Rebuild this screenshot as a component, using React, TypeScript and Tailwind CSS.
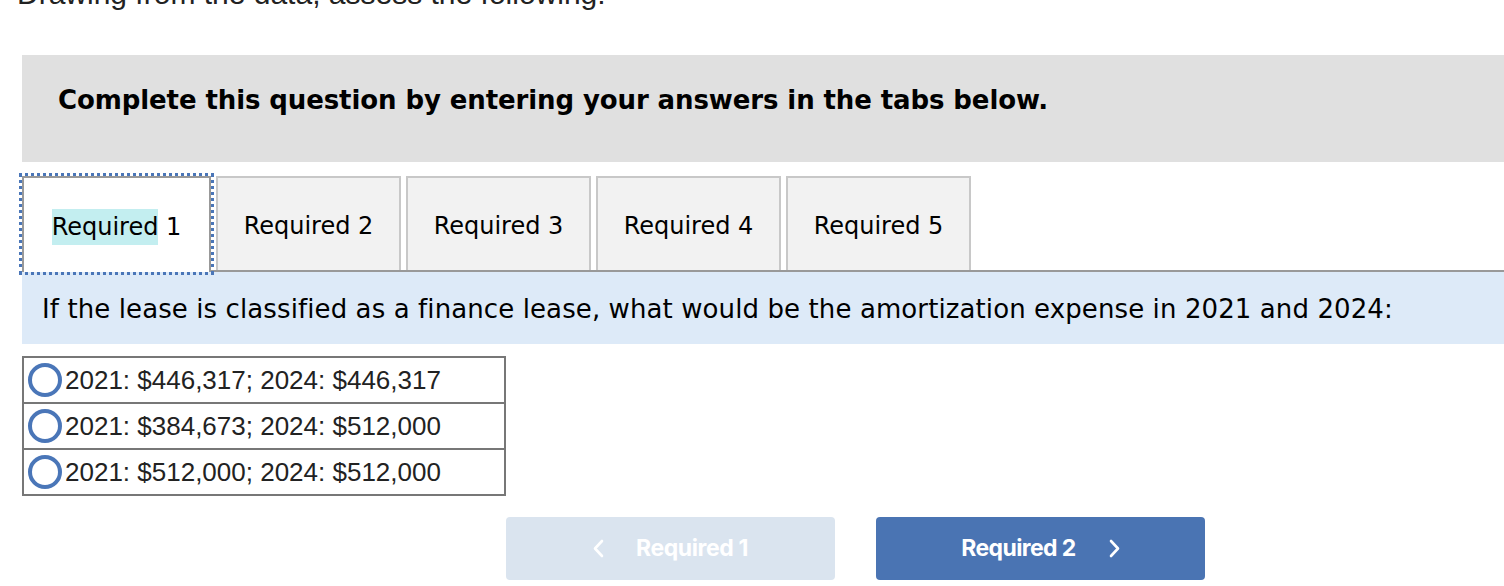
import React from 'react';

const tabs = ['Required 1', 'Required 2', 'Required 3', 'Required 4', 'Required 5'];

const options = [
  '2021: $446,317; 2024: $446,317',
  '2021: $384,673; 2024: $512,000',
  '2021: $512,000; 2024: $512,000',
];

const Chevron: React.FC<{ dir: 'left' | 'right' }> = ({ dir }) => (
  <svg width="11" height="19" viewBox="0 0 11 19" fill="none">
    <polyline
      points={dir === 'right' ? '2,2 9,9.5 2,17' : '9,2 2,9.5 9,17'}
      stroke="white"
      strokeWidth="2.6"
      strokeLinecap="round"
      strokeLinejoin="round"
    />
  </svg>
);

const App: React.FC = () => {
  return (
    <div className="w-[1504px] h-[586px] overflow-hidden bg-white">
      {/* Cut-off instruction line */}
      <div className="-mt-[26px] h-[40px] pl-[17px] text-[30px] leading-[40px] text-[#222] font-['Liberation_Sans',Arial,sans-serif] whitespace-nowrap">
        Drawing from the data, assess the following:
      </div>

      {/* Banner */}
      <div className="mt-[41px] ml-[22px] h-[107px] bg-[#e0e0e0] pl-[36px] pt-[29px]">
        <h2 className="text-[26px] leading-[32px] font-bold text-black font-['DejaVu_Sans',Verdana,sans-serif] tracking-[-0.1px] whitespace-nowrap">
          Complete this question by entering your answers in the tabs below.
        </h2>
      </div>

      {/* Tabs */}
      <div className="mt-[14px] ml-[22px] flex items-end border-b-2 border-[#999] font-['DejaVu_Sans',Verdana,sans-serif]">
        {tabs.map((t, i) =>
          i === 0 ? (
            <div key={t} className="outline-[3px] outline-dotted outline-[#4a76b8] -mb-[2px] relative z-10">
              <div className="w-[189px] h-[96px] bg-white border-2 border-b-0 border-[#999] flex items-center justify-center pt-[4px] text-[24px] text-black">
                <span className="bg-[#c3eef0]">Required</span>&nbsp;1
              </div>
            </div>
          ) : (
            <div
              key={t}
              className="ml-[5px] w-[185px] h-[94px] bg-[#f2f2f2] border-2 border-b-0 border-[#c8c8c8] flex items-center justify-center pt-[4px] text-[24px] text-black"
            >
              {t}
            </div>
          )
        )}
      </div>

      {/* Question */}
      <div className="ml-[22px] h-[72px] bg-[#ddeaf8] flex items-center pl-[20px] pt-[2px] text-[26px] text-black font-['DejaVu_Sans',Verdana,sans-serif] tracking-[0.1px] whitespace-nowrap">
        If the lease is classified as a finance lease, what would be the amortization expense in 2021 and 2024:
      </div>

      {/* Options */}
      <div className="mt-[12px] ml-[22px] w-[484px] border-2 border-[#777] font-['Liberation_Sans',Arial,sans-serif]">
        {options.map((o, i) => (
          <label
            key={o}
            className={`flex items-center pl-[4px] gap-[3px] text-[26px] text-[#222] cursor-pointer ${
              i > 0 ? 'h-[46px] border-t-2 border-[#777]' : 'h-[44px]'
            }`}
          >
            <span className="w-[34px] h-[34px] rounded-full border-[4px] border-[#4a76b8] shrink-0" />
            {o}
          </label>
        ))}
      </div>

      {/* Nav buttons */}
      <div className="mt-[21px] ml-[506px] flex gap-[41px] font-['Inter',sans-serif]">
        <button className="w-[329px] h-[63px] rounded-[4px] bg-[#dae4ef] text-white text-[23px] font-bold flex items-center justify-center gap-[32px] tracking-[-0.4px]">
          <Chevron dir="left" />
          <span>Required 1</span>
        </button>
        <button className="w-[329px] h-[63px] rounded-[4px] bg-[#4a74b3] text-white text-[23px] font-bold flex items-center justify-center gap-[33px] tracking-[-0.6px]">
          <span>Required 2</span>
          <Chevron dir="right" />
        </button>
      </div>
    </div>
  );
};

export default App;
